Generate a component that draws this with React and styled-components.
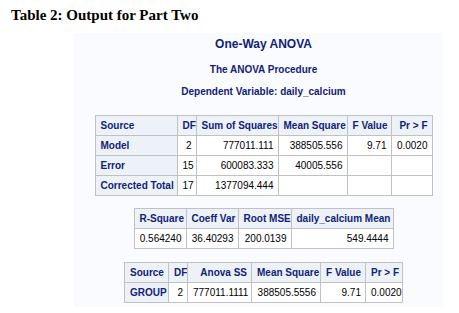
import React from 'react';
import styled, { createGlobalStyle } from 'styled-components';

const GlobalStyle = createGlobalStyle`
	html, body {
		margin: 0;
		padding: 0;
		background: #ffffff;
	}
`;

const Page = styled.div`
	width: 459px;
	height: 313px;
	overflow: hidden;
`;

const Heading = styled.h3`
	margin: 0;
	padding: 8px 0 0 11px;
	font-family: 'Liberation Serif', 'Times New Roman', serif;
	font-size: 15px;
	line-height: 15px;
	font-weight: bold;
	color: #000;
`;

const Panel = styled.div`
	margin: 10px 0 0 74px;
	width: 369px;
	height: 274px;
	box-sizing: border-box;
	padding: 3px 11px 0 21px;
	background: #fafbfe;
	display: flex;
	flex-direction: column;
	align-items: center;
	font-family: 'Liberation Sans', Arial, sans-serif;
`;

const Title = styled.div`
	font-size: 12px;
	line-height: 16px;
	font-weight: bold;
	color: #112277;
`;

const Subtitle = styled.div`
	margin-top: ${(p) => p.gap}px;
	font-size: 10px;
	line-height: 12px;
	font-weight: bold;
	color: #112277;
`;

const Grid = styled.table`
	margin-top: ${(p) => p.gap}px;
	border-collapse: collapse;
	table-layout: fixed;
	font-size: 10px;
	background: #fff;
	border: 1px solid #c1c1c1;
`;

const Cell = styled.td`
	height: 19px;
	padding: 0 4px 0 5px;
	border: 1px solid #c1c1c1;
	text-align: ${(p) => (p.left ? 'left' : 'right')};
	color: #000;
	white-space: nowrap;
	overflow: hidden;
`;

const HeadCell = styled(Cell).attrs({ as: 'th' })`
	background: #edf2f9;
	color: #112277;
	font-weight: bold;
	text-align: ${(p) => (p.left ? 'left' : 'right')};
`;

function DataTable({ widths, head, rows, gap, rowHeads }) {
	return (
		<Grid gap={gap} style={{ width: widths.reduce((a, b) => a + b, 0) }}>
			<colgroup>
				{widths.map((w, i) => (
					<col key={i} style={{ width: w }} />
				))}
			</colgroup>
			<thead>
				<tr>
					{head.map((h, i) => (
						<HeadCell key={i} left={rowHeads && i === 0}>
							{h}
						</HeadCell>
					))}
				</tr>
			</thead>
			<tbody>
				{rows.map((r, ri) => (
					<tr key={ri}>
						{r.map((c, ci) =>
							rowHeads && ci === 0 ? (
								<HeadCell key={ci} left>
									{c}
								</HeadCell>
							) : (
								<Cell key={ci}>{c}</Cell>
							)
						)}
					</tr>
				))}
			</tbody>
		</Grid>
	);
}

export default function App() {
	return (
		<>
			<GlobalStyle />
			<Page>
				<Heading>Table 2: Output for Part Two</Heading>
				<Panel>
					<Title>One-Way ANOVA</Title>
					<Subtitle gap={12}>The ANOVA Procedure</Subtitle>
					<Subtitle gap={10}>Dependent Variable: daily_calcium</Subtitle>
					<DataTable
						gap={16.5}
						rowHeads
						widths={[82, 19, 82, 69, 44, 41]}
						head={['Source', 'DF', 'Sum of Squares', 'Mean Square', 'F Value', 'Pr > F']}
						rows={[
							['Model', '2', '777011.111', '388505.556', '9.71', '0.0020'],
							['Error', '15', '600083.333', '40005.556', '', ''],
							['Corrected Total', '17', '1377094.444', '', '', '']
						]}
					/>
					<DataTable
						gap={12}
						widths={[52, 52, 53, 102]}
						head={['R-Square', 'Coeff Var', 'Root MSE', 'daily_calcium Mean']}
						rows={[['0.564240', '36.40293', '200.0139', '549.4444']]}
					/>
					<DataTable
						gap={13}
						rowHeads
						widths={[44, 19, 64, 69, 45, 37]}
						head={['Source', 'DF', 'Anova SS', 'Mean Square', 'F Value', 'Pr > F']}
						rows={[['GROUP', '2', '777011.1111', '388505.5556', '9.71', '0.0020']]}
					/>
				</Panel>
			</Page>
		</>
	);
}
